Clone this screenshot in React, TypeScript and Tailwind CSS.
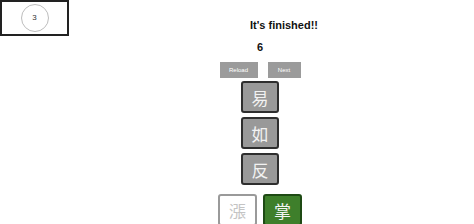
import React from 'react';

const Tile: React.FC<{ ch: string; variant?: 'gray' | 'white' | 'green' }> = ({ ch, variant = 'gray' }) => {
  const styles =
    variant === 'white'
      ? 'bg-white border-[#9a9a9a] text-[#c4c4c4]'
      : variant === 'green'
      ? 'bg-[#3e7f2b] border-[#1e4a14] text-[#f4f4f4]'
      : 'bg-[#999999] border-[#2e2e2e] text-[#f2f2f2]';
  return (
    <div
      className={`w-full h-[32px] rounded-[3px] border-2 flex items-center justify-center text-[17px] leading-none ${styles}`}
      style={{ fontFamily: '"Noto Sans CJK TC", "Noto Sans CJK JP", sans-serif' }}
    >
      {ch}
    </div>
  );
};

const App: React.FC = () => {
  return (
    <div className="w-[474px] h-[224px] overflow-hidden bg-white flex items-start" style={{ fontFamily: '"Liberation Sans", Arial, sans-serif' }}>
      <div className="w-[69px] h-[36px] shrink-0 border-2 border-[#222] bg-white flex items-center justify-center">
        <div className="w-[28px] h-[28px] rounded-full border border-[#bdbdbd] flex items-center justify-center text-[8px] text-[#333]">
          3
        </div>
      </div>

      <div className="w-[382px] flex flex-col items-center">
        <h1 className="mt-[19px] ml-[48px] text-[11px] leading-[13px] font-bold text-[#111]">It's finished!!</h1>
        <p className="mt-[9px] text-[11px] leading-[13px] font-bold text-[#111]">6</p>

        <div className="mt-[8px] flex gap-[10px]">
          <button className="w-[38px] h-[16px] bg-[#9b9b9b] text-white text-[6px] leading-none">Reload</button>
          <button className="w-[33px] h-[16px] bg-[#9b9b9b] text-white text-[6px] leading-none">Next</button>
        </div>

        <div className="mt-[3px] w-[38px] flex flex-col gap-[4px]">
          <Tile ch="易" />
          <Tile ch="如" />
          <Tile ch="反" />
        </div>

        <div className="mt-[9px] flex gap-[6px]">
          <div className="w-[39px]">
            <Tile ch="漲" variant="white" />
          </div>
          <div className="w-[39px]">
            <Tile ch="掌" variant="green" />
          </div>
        </div>
      </div>
    </div>
  );
};

export default App;
